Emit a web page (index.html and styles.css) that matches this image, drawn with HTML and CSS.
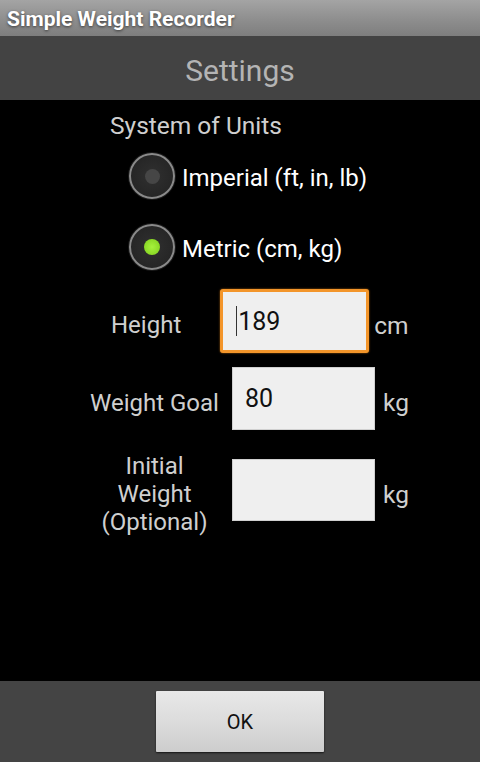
FILE: index.html
```html
<!DOCTYPE html>
<html>
<head>
<meta charset="utf-8">
<link rel="stylesheet" href="styles.css">
</head>
<body>
<div class="screen">
  <div class="titlebar">Simple Weight Recorder</div>
  <div class="header">Settings</div>
  <div class="content">
    <div class="section-title">System of Units</div>
    <div class="radio-row">
      <span class="radio"><span class="dot"></span></span>
      <span class="radio-label">Imperial (ft, in, lb)</span>
    </div>
    <div class="radio-row second">
      <span class="radio"><span class="dot on"></span></span>
      <span class="radio-label">Metric (cm, kg)</span>
    </div>
    <div class="field-row row-height">
      <span class="label label-height">Height</span>
      <span class="input focused"><span class="caret"></span>189</span>
      <span class="unit unit-cm">cm</span>
    </div>
    <div class="field-row row-goal">
      <span class="label">Weight Goal</span>
      <span class="input">80</span>
      <span class="unit">kg</span>
    </div>
    <div class="field-row row-initial">
      <span class="label multi">Initial<br>Weight<br>(Optional)</span>
      <span class="input"></span>
      <span class="unit">kg</span>
    </div>
  </div>
  <div class="footer">
    <button class="ok">OK</button>
  </div>
</div>
</body>
</html>
```

FILE: styles.css
```css
html, body {
  margin: 0;
  padding: 0;
  background: #000;
}
.screen {
  width: 480px;
  height: 762px;
  display: flex;
  flex-direction: column;
  font-family: Roboto, "Noto Sans", sans-serif;
  overflow: hidden;
}
.titlebar {
  height: 36px;
  flex: none;
  box-sizing: border-box;
  padding-left: 7px;
  padding-top: 1px;
  display: flex;
  align-items: center;
  background: linear-gradient(#a4a4a4, #8c8c8c 60%, #7e7e7e);
  color: #fff;
  font-weight: bold;
  font-size: 21px;
  text-shadow: 0 1px 3px rgba(0,0,0,0.6);
}
.header {
  height: 64px;
  flex: none;
  background: #434343;
  color: #b4b4b4;
  font-size: 30px;
  display: flex;
  align-items: center;
  justify-content: center;
  padding-top: 4px;
  box-sizing: border-box;
}
.content {
  flex: 1;
  background: #000;
  display: flex;
  flex-direction: column;
  color: #fff;
}
.section-title {
  margin-top: 12px;
  margin-left: 110px;
  font-size: 24.5px;
  line-height: 28px;
  color: #cfcfcf;
}
.radio-row {
  margin-top: 12px;
  margin-left: 129px;
  height: 48px;
  display: flex;
  align-items: center;
}
.radio-row.second {
  margin-top: 23px;
}
.radio {
  width: 46px;
  height: 46px;
  box-sizing: border-box;
  border-radius: 50%;
  border: 2px solid #8a8a8a;
  background: radial-gradient(circle, #303030 0%, #262626 70%, #1c1c1c 100%);
  box-shadow: 0 0 0 1px #1a1a1a;
  display: flex;
  align-items: center;
  justify-content: center;
  flex: none;
}
.dot {
  width: 15px;
  height: 15px;
  border-radius: 50%;
  background: #464646;
}
.dot.on {
  width: 16px;
  height: 16px;
  background: radial-gradient(circle, #a6f23c 0%, #8ad826 70%, #6fb81a 100%);
}
.radio-label {
  margin-left: 7px;
  font-size: 24px;
  color: #fff;
  padding-top: 3px;
}
.field-row {
  display: flex;
  align-items: center;
  color: #cfcfcf;
}
.row-height {
  margin-top: 18px;
  height: 64px;
}
.row-goal {
  margin-top: 14px;
  height: 63px;
}
.row-initial {
  margin-top: 22px;
  height: 84px;
}
.label {
  font-size: 24px;
  margin-left: 88px;
  width: 133px;
  text-align: center;
  line-height: 28px;
  flex: none;
  padding-top: 8px;
  white-space: nowrap;
}
.label.multi {
  padding-top: 0;
}
.label-height {
  margin-left: 111px;
  width: auto;
}
.input {
  flex: none;
  box-sizing: border-box;
  width: 143px;
  height: 63px;
  margin-left: 11px;
  background: #efefef;
  border: 1px solid #d0d0d0;
  color: #111;
  font-size: 25px;
  display: flex;
  align-items: center;
  padding-left: 12px;
}
.row-initial .input {
  height: 62px;
  margin-top: -8px;
}
.input.focused {
  width: 149px;
  height: 64px;
  margin-left: 39px;
  border: 3px solid #f3952a;
  border-radius: 3px;
  padding-left: 13px;
  box-shadow: 0 0 2px #b86a10;
}
.caret {
  display: inline-block;
  width: 1px;
  height: 30px;
  background: #333;
  margin-right: 1px;
}
.unit {
  margin-left: 8px;
  font-size: 24.5px;
  color: #cfcfcf;
  padding-top: 8px;
}
.row-initial .unit {
  padding-top: 0;
}
.unit-cm {
  margin-left: 5px;
}
.footer {
  height: 81px;
  flex: none;
  background: #444;
  display: flex;
  justify-content: center;
  align-items: flex-start;
  padding-top: 10px;
  box-sizing: border-box;
}
.ok {
  width: 168px;
  height: 61px;
  border: none;
  border-radius: 1px;
  background: linear-gradient(#e8e8e8, #dcdcdc 50%, #cdcdcd);
  box-shadow: 0 1px 2px rgba(0,0,0,0.7);
  font-family: Roboto, "Noto Sans", sans-serif;
  font-size: 20px;
  color: #111;
}
```
